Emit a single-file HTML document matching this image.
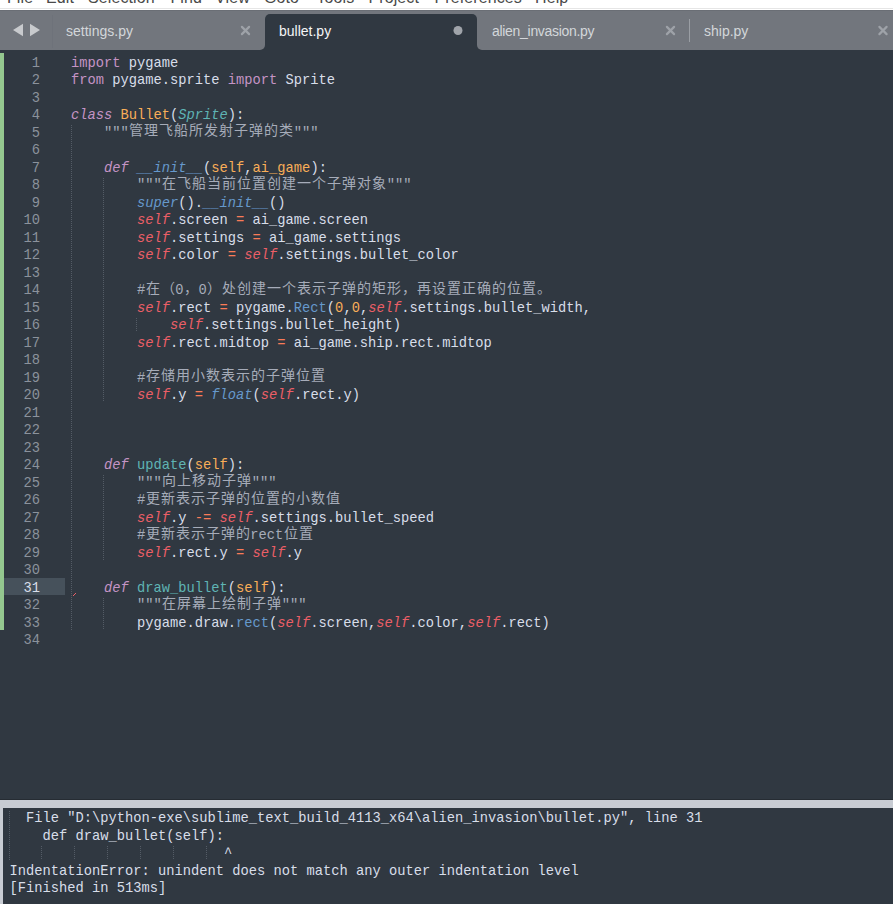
<!DOCTYPE html>
<html lang="zh-CN"><head><meta charset="utf-8">
<style>
html,body{margin:0;padding:0;width:893px;height:904px;overflow:hidden;background:#303841}
#menu{position:absolute;left:0;top:0;width:893px;height:10px;background:#fff;overflow:hidden}
#menu .line{position:absolute;left:0;top:8px;width:893px;height:1px;background:#e6e6e6}
.mi{position:absolute;top:-10.5px;font:16px/15px "Liberation Sans",sans-serif;color:#4a4a4a;letter-spacing:0.1px;white-space:pre}
#tabs{position:absolute;left:0;top:10px;width:893px;height:40px;background:#72767d}
.tab{position:absolute;top:1px;height:39px;background:#72767d}
.lbl{position:absolute;top:14px;font:14px/14px "Liberation Sans",sans-serif;color:#d3d6da;white-space:pre}
#editor{position:absolute;left:0;top:50px;width:893px;height:750px;background:#303841;overflow:hidden}
.ln,.num,.oln{position:absolute;font:13.75px/17.5px "Liberation Mono",monospace;white-space:pre;color:#d8dee9}
.ln{left:71px}
.num{left:0;width:40px;text-align:right;color:#8b929c}
.num.cur{color:#d8dee9}
.cj{display:inline-block;font-size:14px;letter-spacing:1px;text-indent:0.5px;line-height:17.5px;vertical-align:top;overflow:hidden;white-space:nowrap;position:relative;top:-1.5px;height:17.5px}
.g{position:absolute;width:1px;background:repeating-linear-gradient(to bottom,#545c66 0,#545c66 1px,transparent 1px,transparent 2px)}
#out{position:absolute;left:0;top:800px;width:893px;height:104px;background:#303841;overflow:hidden}
.oln{left:9.5px}
</style></head><body>
<div id="menu"><span class="mi" style="left:7px">File</span><span class="mi" style="left:46px">Edit</span><span class="mi" style="left:88px">Selection</span><span class="mi" style="left:170.5px">Find</span><span class="mi" style="left:215px">View</span><span class="mi" style="left:264px">Goto</span><span class="mi" style="left:316.5px">Tools</span><span class="mi" style="left:368.5px">Project</span><span class="mi" style="left:434.5px">Preferences</span><span class="mi" style="left:535px">Help</span><div class="line"></div></div>
<div id="tabs">
  <div style="position:absolute;left:0;top:0;width:893px;height:1px;background:#6a6e75"></div>
  <svg style="position:absolute;left:0;top:0" width="60" height="40">
    <path d="M23 13.8 L13 20 L23 26.2 Z" fill="#c8cacd"/>
    <path d="M30 13.8 L40 20 L30 26.2 Z" fill="#c8cacd"/>
  </svg>
  <div style="position:absolute;left:52px;top:5px;width:1px;height:33px;background:#6e727a"></div>
  <div style="position:absolute;left:255px;top:34px;width:232px;height:6px;background:#303841"></div>
  <div class="tab" style="left:53px;width:212px;border-radius:0 0 5px 0"></div>
  <div class="tab" style="left:477px;width:212px;border-radius:0 0 0 5px"></div>
  <div class="tab" style="left:690px;width:203px"></div>
  <div style="position:absolute;left:689px;top:9px;width:1px;height:23px;background:#9a9ea4"></div>
  <div style="position:absolute;left:265px;top:4px;width:212px;height:36px;background:#303841;border-radius:5px 5px 0 0"></div>
  <span class="lbl" style="left:66px">settings.py</span>
  <span class="lbl" style="left:279px;color:#f4f5f6">bullet.py</span>
  <span class="lbl" style="left:492px;letter-spacing:-0.3px">alien_invasion.py</span>
  <span class="lbl" style="left:704px">ship.py</span>
  <svg style="position:absolute;left:0;top:0" width="893" height="40">
    <g stroke="#9ea2a8" stroke-width="2.2" stroke-linecap="round" fill="none">
      <path d="M241.9 16.9 L249.1 24.1 M249.1 16.9 L241.9 24.1"/>
      <path d="M666.9 16.9 L674.1 24.1 M674.1 16.9 L666.9 24.1"/>
      <path d="M879.4 16.9 L886.6 24.1 M886.6 16.9 L879.4 24.1"/>
    </g>
    <circle cx="458" cy="20.5" r="4.5" fill="#a0a4aa"/>
  </svg>
</div>
<div id="editor"></div>
<div id="gutterhl" style="position:absolute;left:4px;top:578px;width:61px;height:17px;background:#46515b"></div>
<svg style="position:absolute;left:72px;top:592px" width="5" height="5"><path d="M1 4 L2 4 L2 3 L3 3 L3 2 L4 2 L4 1 L3 1 L3 2 L2 2 L2 3 L1 3 Z" fill="#ec5f67"/></svg>
<div id="green" style="position:absolute;left:0;top:52.5px;width:4px;height:577.5px;background:#94c78f"></div>
<div class="g" style="left:71px;top:125px;height:505px"></div>
<div class="g" style="left:103px;top:178px;height:224px"></div>
<div class="g" style="left:136px;top:318px;height:14px"></div>
<div class="g" style="left:103px;top:475px;height:85px"></div>
<div class="g" style="left:103px;top:598px;height:32px"></div>
<div class="ln" style="top:54.60px"><span style="color:#c594c5">import</span> pygame</div>
<div class="num" style="top:54.60px">1</div>
<div class="ln" style="top:72.10px"><span style="color:#c594c5">from</span> pygame.sprite <span style="color:#c594c5">import</span> Sprite</div>
<div class="num" style="top:72.10px">2</div>
<div class="ln" style="top:89.60px"></div>
<div class="num" style="top:89.60px">3</div>
<div class="ln" style="top:107.10px"><span style="color:#c594c5;font-style:italic">class</span> <span style="color:#f9ae58">Bullet</span>(<span style="color:#5fb4b4;font-style:italic">Sprite</span>):</div>
<div class="num" style="top:107.10px">4</div>
<div class="ln" style="top:124.60px">    <span style="color:#a6acb9">"""<span class="cj" style="width:165px">管理飞船所发射子弹的类</span>"""</span></div>
<div class="num" style="top:124.60px">5</div>
<div class="ln" style="top:142.10px"></div>
<div class="num" style="top:142.10px">6</div>
<div class="ln" style="top:159.60px">    <span style="color:#c594c5;font-style:italic">def</span> <span style="color:#6699cc;font-style:italic">__init__</span>(<span style="color:#f9ae58">self</span>,<span style="color:#f9ae58">ai_game</span>):</div>
<div class="num" style="top:159.60px">7</div>
<div class="ln" style="top:177.10px">        <span style="color:#a6acb9">"""<span class="cj" style="width:225px">在飞船当前位置创建一个子弹对象</span>"""</span></div>
<div class="num" style="top:177.10px">8</div>
<div class="ln" style="top:194.60px">        <span style="color:#6699cc;font-style:italic">super</span>().<span style="color:#6699cc;font-style:italic">__init__</span>()</div>
<div class="num" style="top:194.60px">9</div>
<div class="ln" style="top:212.10px">        <span style="color:#ec5f67;font-style:italic">self</span>.screen <span style="color:#f97b58">=</span> ai_game.screen</div>
<div class="num" style="top:212.10px">10</div>
<div class="ln" style="top:229.60px">        <span style="color:#ec5f67;font-style:italic">self</span>.settings <span style="color:#f97b58">=</span> ai_game.settings</div>
<div class="num" style="top:229.60px">11</div>
<div class="ln" style="top:247.10px">        <span style="color:#ec5f67;font-style:italic">self</span>.color <span style="color:#f97b58">=</span> <span style="color:#ec5f67;font-style:italic">self</span>.settings.bullet_color</div>
<div class="num" style="top:247.10px">12</div>
<div class="ln" style="top:264.60px"></div>
<div class="num" style="top:264.60px">13</div>
<div class="ln" style="top:282.10px">        <span style="color:#a6acb9">#<span class="cj" style="width:30px">在（</span>0<span class="cj" style="width:15px">，</span>0<span class="cj" style="width:345px">）处创建一个表示子弹的矩形，再设置正确的位置。</span></span></div>
<div class="num" style="top:282.10px">14</div>
<div class="ln" style="top:299.60px">        <span style="color:#ec5f67;font-style:italic">self</span>.rect <span style="color:#f97b58">=</span> pygame.<span style="color:#6699cc">Rect</span>(<span style="color:#f9ae58">0</span>,<span style="color:#f9ae58">0</span>,<span style="color:#ec5f67;font-style:italic">self</span>.settings.bullet_width,</div>
<div class="num" style="top:299.60px">15</div>
<div class="ln" style="top:317.10px">            <span style="color:#ec5f67;font-style:italic">self</span>.settings.bullet_height)</div>
<div class="num" style="top:317.10px">16</div>
<div class="ln" style="top:334.60px">        <span style="color:#ec5f67;font-style:italic">self</span>.rect.midtop <span style="color:#f97b58">=</span> ai_game.ship.rect.midtop</div>
<div class="num" style="top:334.60px">17</div>
<div class="ln" style="top:352.10px"></div>
<div class="num" style="top:352.10px">18</div>
<div class="ln" style="top:369.60px">        <span style="color:#a6acb9">#<span class="cj" style="width:180px">存储用小数表示的子弹位置</span></span></div>
<div class="num" style="top:369.60px">19</div>
<div class="ln" style="top:387.10px">        <span style="color:#ec5f67;font-style:italic">self</span>.y <span style="color:#f97b58">=</span> <span style="color:#6699cc;font-style:italic">float</span>(<span style="color:#ec5f67;font-style:italic">self</span>.rect.y)</div>
<div class="num" style="top:387.10px">20</div>
<div class="ln" style="top:404.60px"></div>
<div class="num" style="top:404.60px">21</div>
<div class="ln" style="top:422.10px"></div>
<div class="num" style="top:422.10px">22</div>
<div class="ln" style="top:439.60px"></div>
<div class="num" style="top:439.60px">23</div>
<div class="ln" style="top:457.10px">    <span style="color:#c594c5;font-style:italic">def</span> <span style="color:#5fb4b4">update</span>(<span style="color:#f9ae58">self</span>):</div>
<div class="num" style="top:457.10px">24</div>
<div class="ln" style="top:474.60px">        <span style="color:#a6acb9">"""<span class="cj" style="width:90px">向上移动子弹</span>"""</span></div>
<div class="num" style="top:474.60px">25</div>
<div class="ln" style="top:492.10px">        <span style="color:#a6acb9">#<span class="cj" style="width:195px">更新表示子弹的位置的小数值</span></span></div>
<div class="num" style="top:492.10px">26</div>
<div class="ln" style="top:509.60px">        <span style="color:#ec5f67;font-style:italic">self</span>.y <span style="color:#f97b58">-=</span> <span style="color:#ec5f67;font-style:italic">self</span>.settings.bullet_speed</div>
<div class="num" style="top:509.60px">27</div>
<div class="ln" style="top:527.10px">        <span style="color:#a6acb9">#<span class="cj" style="width:105px">更新表示子弹的</span>rect<span class="cj" style="width:30px">位置</span></span></div>
<div class="num" style="top:527.10px">28</div>
<div class="ln" style="top:544.60px">        <span style="color:#ec5f67;font-style:italic">self</span>.rect.y <span style="color:#f97b58">=</span> <span style="color:#ec5f67;font-style:italic">self</span>.y</div>
<div class="num" style="top:544.60px">29</div>
<div class="ln" style="top:562.10px"></div>
<div class="num" style="top:562.10px">30</div>
<div class="ln" style="top:579.60px">    <span style="color:#c594c5;font-style:italic">def</span> <span style="color:#5fb4b4">draw_bullet</span>(<span style="color:#f9ae58">self</span>):</div>
<div class="num cur" style="top:579.60px">31</div>
<div class="ln" style="top:597.10px">        <span style="color:#a6acb9">"""<span class="cj" style="width:120px">在屏幕上绘制子弹</span>"""</span></div>
<div class="num" style="top:597.10px">32</div>
<div class="ln" style="top:614.60px">        pygame.draw.<span style="color:#6699cc">rect</span>(<span style="color:#ec5f67;font-style:italic">self</span>.screen,<span style="color:#ec5f67;font-style:italic">self</span>.color,<span style="color:#ec5f67;font-style:italic">self</span>.rect)</div>
<div class="num" style="top:614.60px">33</div>
<div class="ln" style="top:632.10px"></div>
<div class="num" style="top:632.10px">34</div>
<div style="position:absolute;left:0;top:799px;width:893px;height:1px;background:#262c33"></div>
<div style="position:absolute;left:0;top:800px;width:893px;height:8px;background:#c8ccd3"></div>
<div style="position:absolute;left:0;top:808px;width:3px;height:96px;background:#c8ccd3"></div>
<div class="g" style="left:9px;top:811px;height:49px"></div>
<div class="g" style="left:41px;top:846px;height:14px"></div>
<div class="g" style="left:74px;top:846px;height:14px"></div>
<div class="g" style="left:107px;top:846px;height:14px"></div>
<div class="g" style="left:140px;top:846px;height:14px"></div>
<div class="g" style="left:173px;top:846px;height:14px"></div>
<div class="g" style="left:206px;top:846px;height:14px"></div>
<div class="oln" style="top:810.10px">  File "D:\python-exe\sublime_text_build_4113_x64\alien_invasion\bullet.py", line 31</div>
<div class="oln" style="top:827.60px">    def draw_bullet(self):</div>
<div class="oln" style="top:845.10px">                          ^</div>
<div class="oln" style="top:862.60px">IndentationError: unindent does not match any outer indentation level</div>
<div class="oln" style="top:880.10px">[Finished in 513ms]</div>
</body></html>
